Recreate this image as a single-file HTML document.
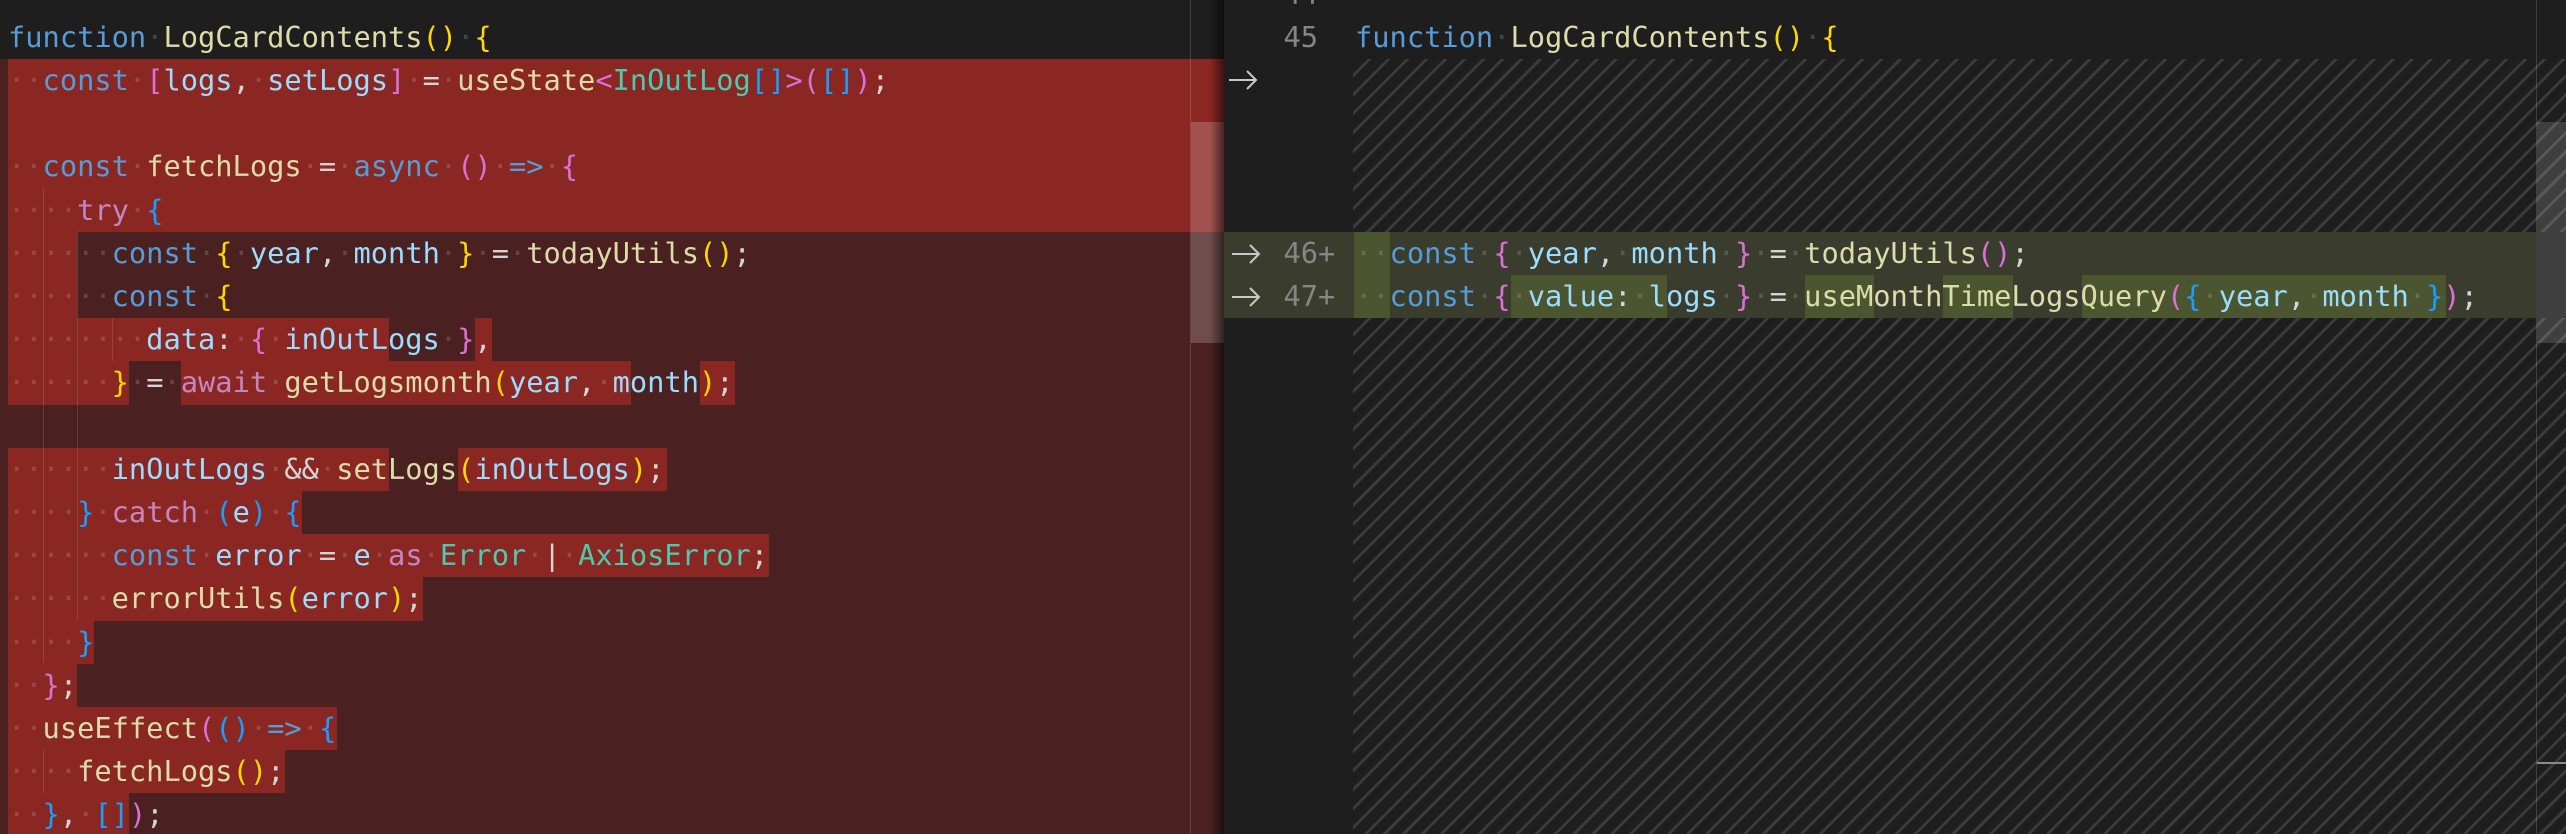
<!DOCTYPE html>
<html><head><meta charset="utf-8">
<style>
html,body{margin:0;padding:0;background:#1e1e1e;width:2566px;height:834px;overflow:hidden;position:relative}
.ab{position:absolute}
.row{position:absolute;height:43.2px;line-height:43.2px;font-family:"DejaVu Sans Mono","Liberation Mono",monospace;font-size:28.7px;white-space:pre;color:#d4d4d4}
i{font-style:normal;color:rgba(210,210,210,0.2)}
.k{color:#569cd6}.c{color:#c586c0}.f{color:#dcdcaa}.v{color:#9cdcfe}.t{color:#4ec9b0}.o{color:#d4d4d4}.g{color:#ffd700}.p{color:#da70d6}.b{color:#179fff}
.red{position:absolute;background:#8a2722;height:43.2px}
.hatch{position:absolute;background:#1e1e1e repeating-linear-gradient(135deg,#1e1e1e 0px,#1e1e1e 10.5px,#3b3b3b 10.5px,#3b3b3b 13.4px)}
.guide{position:absolute;width:1px;background:rgba(255,255,255,0.12)}
.ln{position:absolute;width:70px;text-align:right;height:43.2px;line-height:43.2px;font-family:"DejaVu Sans Mono","Liberation Mono",monospace;font-size:28.7px;color:#858585}
.gh{position:absolute;background:#4b5631;height:43.2px}
</style></head><body>

<div class="ab" style="left:0;top:59px;width:1224px;height:775px;background:#4a2120"></div>
<div class="red" style="left:8px;top:59px;width:1216px;height:172.8px"></div>
<div class="red" style="left:8px;top:231.8px;width:69px"></div>
<div class="red" style="left:8px;top:275px;width:69px"></div>
<div class="red" style="left:8px;top:318.2px;width:381px"></div>
<div class="red" style="left:475px;top:318.2px;width:17px"></div>
<div class="red" style="left:8px;top:361.4px;width:121px"></div>
<div class="red" style="left:181px;top:361.4px;width:450px"></div>
<div class="red" style="left:700px;top:361.4px;width:35px"></div>
<div class="red" style="left:8px;top:447.8px;width:381px"></div>
<div class="red" style="left:458px;top:447.8px;width:209px"></div>
<div class="red" style="left:8px;top:491px;width:294px"></div>
<div class="red" style="left:8px;top:534.2px;width:761px"></div>
<div class="red" style="left:8px;top:577.4px;width:415px"></div>
<div class="red" style="left:8px;top:620.6px;width:86px"></div>
<div class="red" style="left:8px;top:663.8px;width:69px"></div>
<div class="red" style="left:8px;top:707px;width:329px"></div>
<div class="red" style="left:8px;top:750.2px;width:277px"></div>
<div class="red" style="left:8px;top:793.4px;width:121px"></div>

<div class="guide" style="left:43px;top:188px;height:475px"></div>
<div class="guide" style="left:77px;top:231px;height:389px"></div>
<div class="guide" style="left:112px;top:318px;height:43px"></div>
<div class="guide" style="left:43px;top:750px;height:43px"></div>

<div class="row" style="left:8px;top:15.8px"><span class="k">function</span><i>·</i><span class="f">LogCardContents</span><span class="g">()</span><i>·</i><span class="g">{</span></div>
<div class="row" style="left:8px;top:59px"><i>··</i><span class="k">const</span><i>·</i><span class="p">[</span><span class="v">logs</span>,<i>·</i><span class="v">setLogs</span><span class="p">]</span><i>·</i>=<i>·</i><span class="f">useState</span><span class="p">&lt;</span><span class="t">InOutLog</span><span class="b">[]</span><span class="p">&gt;(</span><span class="b">[]</span><span class="p">)</span>;</div>
<div class="row" style="left:8px;top:145.4px"><i>··</i><span class="k">const</span><i>·</i><span class="f">fetchLogs</span><i>·</i>=<i>·</i><span class="k">async</span><i>·</i><span class="p">()</span><i>·</i><span class="k">=&gt;</span><i>·</i><span class="p">{</span></div>
<div class="row" style="left:8px;top:188.6px"><i>····</i><span class="c">try</span><i>·</i><span class="b">{</span></div>
<div class="row" style="left:8px;top:231.8px"><i>······</i><span class="k">const</span><i>·</i><span class="g">{</span><i>·</i><span class="v">year</span>,<i>·</i><span class="v">month</span><i>·</i><span class="g">}</span><i>·</i>=<i>·</i><span class="f">todayUtils</span><span class="g">()</span>;</div>
<div class="row" style="left:8px;top:275px"><i>······</i><span class="k">const</span><i>·</i><span class="g">{</span></div>
<div class="row" style="left:8px;top:318.2px"><i>········</i><span class="v">data</span>:<i>·</i><span class="p">{</span><i>·</i><span class="v">inOutLogs</span><i>·</i><span class="p">}</span>,</div>
<div class="row" style="left:8px;top:361.4px"><i>······</i><span class="g">}</span><i>·</i>=<i>·</i><span class="c">await</span><i>·</i><span class="f">getLogsmonth</span><span class="g">(</span><span class="v">year</span>,<i>·</i><span class="v">month</span><span class="g">)</span>;</div>
<div class="row" style="left:8px;top:447.8px"><i>······</i><span class="v">inOutLogs</span><i>·</i>&amp;&amp;<i>·</i><span class="f">setLogs</span><span class="g">(</span><span class="v">inOutLogs</span><span class="g">)</span>;</div>
<div class="row" style="left:8px;top:491px"><i>····</i><span class="b">}</span><i>·</i><span class="c">catch</span><i>·</i><span class="b">(</span><span class="v">e</span><span class="b">)</span><i>·</i><span class="b">{</span></div>
<div class="row" style="left:8px;top:534.2px"><i>······</i><span class="k">const</span><i>·</i><span class="v">error</span><i>·</i>=<i>·</i><span class="v">e</span><i>·</i><span class="c">as</span><i>·</i><span class="t">Error</span><i>·</i>|<i>·</i><span class="t">AxiosError</span>;</div>
<div class="row" style="left:8px;top:577.4px"><i>······</i><span class="f">errorUtils</span><span class="g">(</span><span class="v">error</span><span class="g">)</span>;</div>
<div class="row" style="left:8px;top:620.6px"><i>····</i><span class="b">}</span></div>
<div class="row" style="left:8px;top:663.8px"><i>··</i><span class="p">}</span>;</div>
<div class="row" style="left:8px;top:707px"><i>··</i><span class="f">useEffect</span><span class="p">(</span><span class="b">()</span><i>·</i><span class="k">=&gt;</span><i>·</i><span class="b">{</span></div>
<div class="row" style="left:8px;top:750.2px"><i>····</i><span class="f">fetchLogs</span><span class="g">()</span>;</div>
<div class="row" style="left:8px;top:793.4px"><i>··</i><span class="b">}</span>,<i>·</i><span class="b">[]</span><span class="p">)</span>;</div>

<div class="ab" style="left:1190px;top:0;width:1px;height:834px;background:rgba(255,255,255,0.15)"></div>
<div class="ab" style="left:1191px;top:122px;width:33px;height:221px;background:rgba(255,255,255,0.2)"></div>
<div class="ab" style="left:1210px;top:0;width:14px;height:834px;background:linear-gradient(to right,rgba(0,0,0,0),rgba(0,0,0,0.55))"></div>

<div class="ab" style="left:1224px;top:0;width:1342px;height:834px;background:#1e1e1e"></div>
<div class="hatch" style="left:1353px;top:59px;width:1213px;height:173px"></div>
<div class="hatch" style="left:1353px;top:318px;width:1213px;height:516px"></div>
<div class="ab" style="left:1224px;top:231.8px;width:1312px;height:86.4px;background:#3a3d2e"></div>
<div class="ab" style="left:1354px;top:231.8px;width:2px;height:86.4px;background:#4b5631"></div>
<div class="gh" style="left:1355px;top:231.8px;width:35px"></div>
<div class="gh" style="left:1355px;top:275px;width:35px"></div>
<div class="gh" style="left:1511px;top:275px;width:156px"></div>
<div class="gh" style="left:1805px;top:275px;width:69px"></div>
<div class="gh" style="left:1943px;top:275px;width:70px"></div>
<div class="gh" style="left:2082px;top:275px;width:364px"></div>

<div class="ln" style="left:1248px;top:-27.4px">44</div>
<div class="ln" style="left:1248px;top:15.8px">45</div>
<div class="ln" style="left:1248px;top:231.8px">46</div>
<div class="ln" style="left:1248px;top:275px">47</div>
<div class="ln" style="left:1318px;top:231.8px;width:20px;text-align:left">+</div>
<div class="ln" style="left:1318px;top:275px;width:20px;text-align:left">+</div>

<svg class="ab" style="left:1226px;top:66px" width="36" height="28" viewBox="0 0 36 28"><path d="M3 14 H30 M21 5 L30 14 L21 23" fill="none" stroke="#c8c8c8" stroke-width="2"/></svg>
<svg class="ab" style="left:1229px;top:240px" width="36" height="28" viewBox="0 0 36 28"><path d="M3 14 H30 M21 5 L30 14 L21 23" fill="none" stroke="#c8c8c8" stroke-width="2"/></svg>
<svg class="ab" style="left:1229px;top:283px" width="36" height="28" viewBox="0 0 36 28"><path d="M3 14 H30 M21 5 L30 14 L21 23" fill="none" stroke="#c8c8c8" stroke-width="2"/></svg>

<div class="row" style="left:1355px;top:15.8px"><span class="k">function</span><i>·</i><span class="f">LogCardContents</span><span class="g">()</span><i>·</i><span class="g">{</span></div>
<div class="row" style="left:1355px;top:231.8px"><i>··</i><span class="k">const</span><i>·</i><span class="p">{</span><i>·</i><span class="v">year</span>,<i>·</i><span class="v">month</span><i>·</i><span class="p">}</span><i>·</i>=<i>·</i><span class="f">todayUtils</span><span class="p">()</span>;</div>
<div class="row" style="left:1355px;top:275px"><i>··</i><span class="k">const</span><i>·</i><span class="p">{</span><i>·</i><span class="v">value</span>:<i>·</i><span class="v">logs</span><i>·</i><span class="p">}</span><i>·</i>=<i>·</i><span class="f">useMonthTimeLogsQuery</span><span class="p">(</span><span class="b">{</span><i>·</i><span class="v">year</span>,<i>·</i><span class="v">month</span><i>·</i><span class="b">}</span><span class="p">)</span>;</div>

<div class="ab" style="left:2536px;top:0;width:1px;height:834px;background:rgba(255,255,255,0.15)"></div>
<div class="ab" style="left:2537px;top:122px;width:29px;height:221px;background:rgba(255,255,255,0.15)"></div>
<div class="ab" style="left:2537px;top:762px;width:29px;height:2px;background:#8a8a8a"></div>
</body></html>
